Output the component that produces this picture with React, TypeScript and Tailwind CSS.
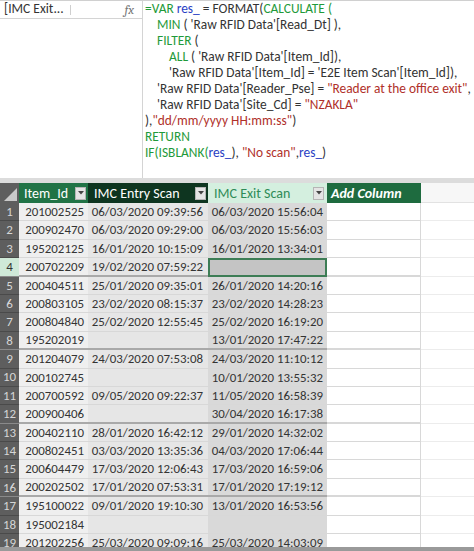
import React from "react";

type Row = [string, string, string];

const rows: Row[] = [
  ["201002525", "06/03/2020 09:39:56", "06/03/2020 15:56:04"],
  ["200902470", "06/03/2020 09:29:00", "06/03/2020 15:56:03"],
  ["195202125", "16/01/2020 10:15:09", "16/01/2020 13:34:01"],
  ["200702209", "19/02/2020 07:59:22", ""],
  ["200404511", "25/01/2020 09:35:01", "26/01/2020 14:20:16"],
  ["200803105", "23/02/2020 08:15:37", "23/02/2020 14:28:23"],
  ["200804840", "25/02/2020 12:55:45", "25/02/2020 16:19:20"],
  ["195202019", "", "13/01/2020 17:47:22"],
  ["201204079", "24/03/2020 07:53:08", "24/03/2020 11:10:12"],
  ["200102745", "", "10/01/2020 13:55:32"],
  ["200700592", "09/05/2020 09:22:37", "11/05/2020 16:58:39"],
  ["200900406", "", "30/04/2020 16:17:38"],
  ["200402110", "28/01/2020 16:42:12", "29/01/2020 14:32:02"],
  ["200802451", "03/03/2020 13:35:36", "04/03/2020 17:06:44"],
  ["200604479", "17/03/2020 12:06:43", "17/03/2020 16:59:06"],
  ["200202502", "17/01/2020 07:53:31", "17/01/2020 17:19:12"],
  ["195100022", "09/01/2020 19:10:30", "13/01/2020 16:53:56"],
  ["195002184", "", ""],
  ["201202256", "25/03/2020 09:09:16", "25/03/2020 14:03:09"],
];

const G = ({ children }: { children: React.ReactNode }) => (
  <span className="text-[#1f9a3a]">{children}</span>
);
const B = ({ children }: { children: React.ReactNode }) => (
  <span className="text-[#2a3fc4]">{children}</span>
);
const R = ({ children }: { children: React.ReactNode }) => (
  <span className="text-[#b0302a]">{children}</span>
);

const DropBtn = () => (
  <span className="flex h-[13px] w-[11px] items-center justify-center border border-[#b5b5b5] bg-[#e4e4e4]">
    <svg width="6" height="4" viewBox="0 0 6 4">
      <path d="M0 0 L6 0 L3 3.5 Z" fill="#444" />
    </svg>
  </span>
);

export default function App() {
  return (
    <div
      className="flex h-[551px] w-[474px] flex-col overflow-hidden bg-white text-[#333]"
      style={{ fontFamily: "Carlito, Calibri, 'Liberation Sans', sans-serif" }}
    >
      {/* formula bar */}
      <div className="flex h-[178px] shrink-0 overflow-hidden border-t border-[#d0d0d0]">
        <div className="w-[143px] shrink-0 border-r border-[#d4d4d4]">
          <div className="flex h-[18px] items-center border-b border-[#d4d4d4] pl-[4px] pr-1 text-[13.5px]">
            <span className="whitespace-nowrap">[IMC Exit...</span>
            <span className="ml-[6px] h-[10px] w-px bg-[#cfcfcf]" />
            <span className="ml-auto mr-[4px] font-serif text-[13px] italic text-[#777]">fx</span>
          </div>
        </div>
        <div className="min-w-0 flex-1 whitespace-pre pl-[2px] text-[13.4px] leading-[16px] text-[#333]">
          <div>
            <G>=VAR</G> <B>res_</B> = FORMAT(<G>CALCULATE (</G>
          </div>
          <div className="pl-[12px]">
            <G>MIN</G> ( 'Raw RFID Data'[Read_Dt] ),
          </div>
          <div className="pl-[12px]">
            <G>FILTER</G> (
          </div>
          <div className="pl-[24px]">
            <G>ALL</G> ( 'Raw RFID Data'[Item_Id]),
          </div>
          <div className="pl-[24px]">'Raw RFID Data'[Item_Id] = 'E2E Item Scan'[Item_Id]),</div>
          <div className="pl-[12px]">
            'Raw RFID Data'[Reader_Pse] = <R>"Reader at the office exit"</R>,
          </div>
          <div className="pl-[12px]">
            'Raw RFID Data'[Site_Cd] = <R>"NZAKLA"</R>
          </div>
          <div>
            ),<R>"dd/mm/yyyy HH:mm:ss"</R>)
          </div>
          <div>
            <G>RETURN</G>
          </div>
          <div>
            <G>IF(ISBLANK(</G>
            <B>res_</B>), <R>"No scan"</R>,<B>res_</B>)
          </div>
        </div>
      </div>

      <div className="h-[5px] shrink-0 bg-[#dcdcdc]" />

      {/* grid */}
      <div className="min-h-0 flex-1 overflow-hidden whitespace-nowrap text-[12.9px]">
        <div className="flex h-[20px] items-stretch text-[14px]">
          <div className="relative w-[19px] shrink-0 bg-[#5e5e5e]">
            <svg className="absolute bottom-[2px] right-[2px]" width="13" height="13" viewBox="0 0 13 13">
              <path d="M13 0 L13 13 L0 13 Z" fill="#c9c9c9" />
            </svg>
          </div>
          <div className="flex w-[69px] shrink-0 items-center bg-[#217346] pl-[5px] pr-[2px] text-white">
            <span>Item_Id</span>
            <span className="ml-auto">
              <DropBtn />
            </span>
          </div>
          <div className="flex w-[120px] shrink-0 items-center bg-[#0e3520] pl-[6px] pr-[2px] text-white">
            <span>IMC Entry Scan</span>
            <span className="ml-auto">
              <DropBtn />
            </span>
          </div>
          <div className="flex w-[119px] shrink-0 items-center bg-[#d4efdf] pl-[6px] pr-[3px] text-[#2e8b57]">
            <span>IMC Exit Scan</span>
            <span className="ml-auto">
              <DropBtn />
            </span>
          </div>
          <div className="flex w-[94px] shrink-0 items-center bg-[#1e6b3f] pl-[4px] font-bold italic text-white">
            Add Column
          </div>
          <div className="flex-1 border-b border-[#e2e2e2] bg-[#f7f7f7]" />
        </div>

        {rows.map((r, i) => {
          const n = i + 1;
          const sel = n === 4;
          const thick = n % 4 === 0;
          const line = thick ? "border-b-2 border-[#a9a9a9]" : "border-b border-[#d8d8d8]";
          return (
            <div key={n} className="flex h-[18.4px]">
              <div
                className={`flex w-[19px] shrink-0 items-center justify-center text-[13px] ${
                  sel ? "bg-[#cfe9d8] text-[#333]" : "bg-[#5e5e5e] text-[#d6d6d6]"
                } border-b ${thick ? "border-[#8a8a8a]" : "border-[#4a4a4a]"}`}
              >
                {n}
              </div>
              <div className={`flex w-[69px] shrink-0 items-center justify-end bg-[#efefef] pr-[4px] ${line}`}>
                {r[0]}
              </div>
              <div className={`flex w-[120px] shrink-0 items-center justify-end bg-[#e6e6e6] pr-[5px] ${line}`}>
                {r[1]}
              </div>
              {sel ? (
                <div className="w-[119px] shrink-0 border-2 border-[#3d7d55] bg-[#c4c4c4]" />
              ) : (
                <div className={`flex w-[119px] shrink-0 items-center justify-end bg-[#d9d9d9] pr-[4px] ${line}`}>
                  {r[2]}
                </div>
              )}
              <div className={`w-[94px] shrink-0 border-r border-[#d8d8d8] bg-white ${line}`} />
              <div className="flex-1 border-b border-[#ececec] bg-white" />
            </div>
          );
        })}
      </div>

      <div className="h-[4px] shrink-0 bg-[#9a9a9a]" />
    </div>
  );
}
